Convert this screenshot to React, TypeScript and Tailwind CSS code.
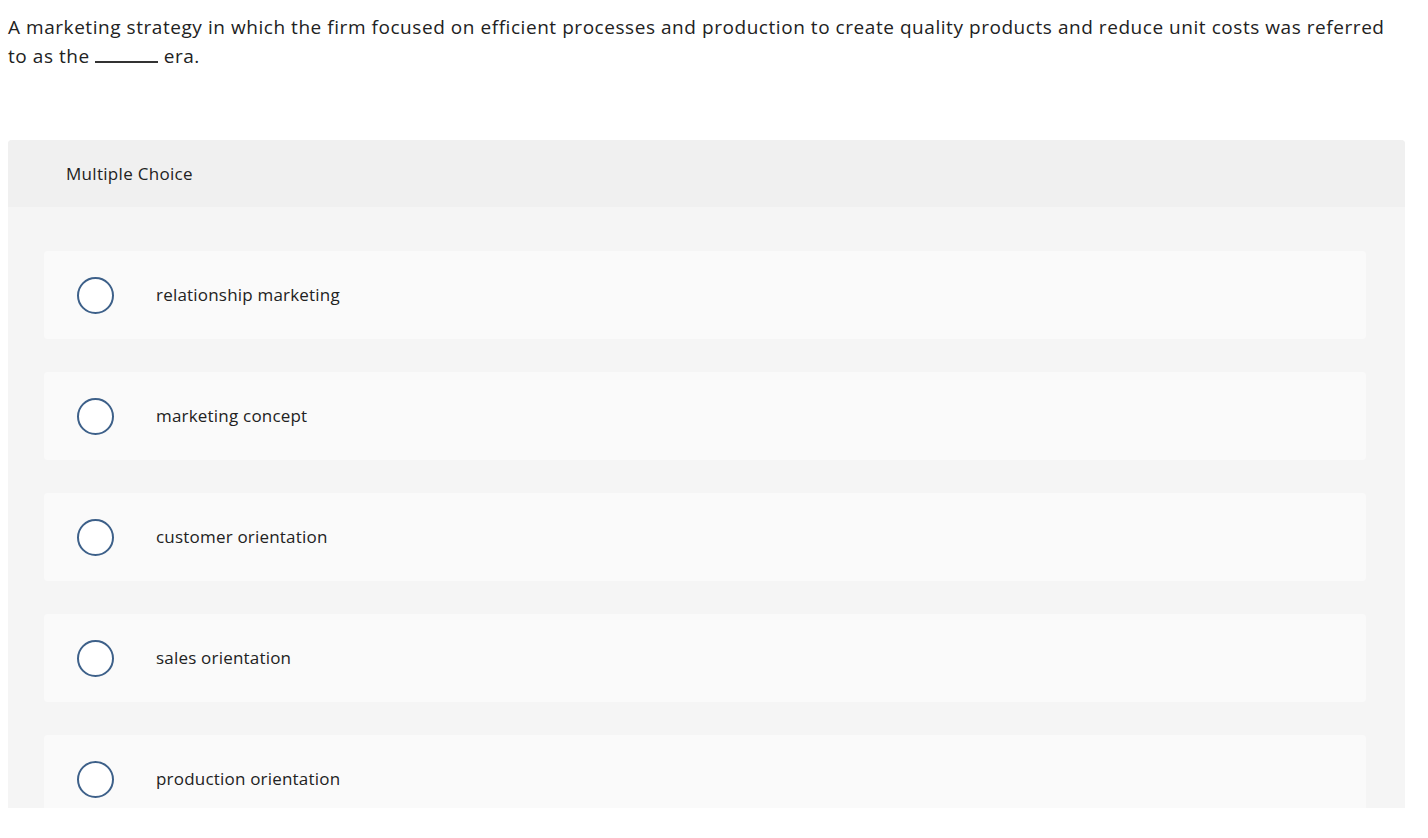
import React from "react";

const options = [
  "relationship marketing",
  "marketing concept",
  "customer orientation",
  "sales orientation",
  "production orientation",
];

const Radio = () => (
  <span className="w-[37px] h-[37px] shrink-0 rounded-full border-2 border-[#3d6089] bg-white" />
);

export default function App() {
  return (
    <div className="w-[1428px] h-[838px] bg-white text-[#333] overflow-hidden" style={{ fontFamily: "'Open Sans', Lato, sans-serif" }}>
      <div className="pl-2 pr-[36px] pt-[13px] text-[19px] tracking-[0.55px] leading-[29px] text-[#222]">
        A marketing strategy in which the firm focused on efficient processes and production to create quality products and reduce unit costs was referred to as the{" "}
        <span className="inline-block w-[63px] h-[2px] bg-[#333] align-baseline" />
        {" era."}
      </div>

      <div className="mt-[69px] mx-2 w-[1397px] h-[668px] overflow-hidden rounded-t-[4px] bg-[#f5f5f5]">
        <div className="h-[67px] bg-[#f0f0f0] flex items-center pl-[58px] text-[17px] tracking-[0.3px] text-[#222]">
          Multiple Choice
        </div>
        <div className="pl-9 pr-[39px] pt-[44px] flex flex-col gap-[33px]">
          {options.map((o) => (
            <div key={o} className="h-[88px] shrink-0 rounded-[4px] bg-[#fafafa] flex items-center pl-[33px]">
              <Radio />
              <span className="ml-[42px] text-[17px] tracking-[0.2px] text-[#222]">{o}</span>
            </div>
          ))}
        </div>
      </div>
    </div>
  );
}
